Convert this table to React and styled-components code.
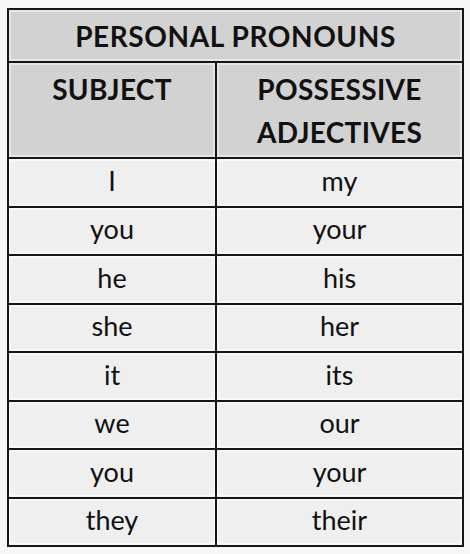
import React from "react";
import styled, { createGlobalStyle } from "styled-components";

const Global = createGlobalStyle`
  html, body { margin: 0; padding: 0; background: #f7f7f7; }
  body { font-family: "Lato", "Open Sans", "Liberation Sans", sans-serif; }
`;

const Page = styled.div`
  padding: 8px 0 0 7px;
`;

const Table = styled.table`
  border-collapse: collapse;
  width: 455px;
  table-layout: fixed;
  color: #111;
  border: 2px solid #161616;
`;

const HeadCell = styled.th`
  border: 2px solid #161616;
  background: #d2d2d2;
  box-shadow: inset 0 0 0 2px #e6e6e6;
  font-weight: 700;
  font-size: 28px;
  letter-spacing: ${(p) => p.$ls || 0.3}px;
  text-align: center;
  padding: 0;
  height: ${(p) => p.$h}px;
  vertical-align: ${(p) => p.$valign || "middle"};
  line-height: ${(p) => p.$lh || 30}px;
  padding-top: ${(p) => p.$pt || 0}px;
  box-sizing: border-box;
`;

const Cell = styled.td`
  border: 2px solid #161616;
  background: #efefef;
  box-shadow: inset 0 0 0 2px #f7f7f7;
  font-size: 27px;
  text-align: center;
  padding: 0 0 3px 0;
  height: 48.5px;
  box-sizing: border-box;
  line-height: 30px;
`;

const rows = [
  ["I", "my"],
  ["you", "your"],
  ["he", "his"],
  ["she", "her"],
  ["it", "its"],
  ["we", "our"],
  ["you", "your"],
  ["they", "their"],
];

export default function App() {
  return (
    <>
      <Global />
      <Page>
        <Table>
          <colgroup>
            <col style={{ width: 208 }} />
            <col style={{ width: 247 }} />
          </colgroup>
          <thead>
            <tr>
              <HeadCell colSpan={2} $h={53} $ls={0.6}>PERSONAL PRONOUNS</HeadCell>
            </tr>
            <tr>
              <HeadCell $h={96} $valign="top" $lh={43} $pt={5}>SUBJECT</HeadCell>
              <HeadCell $h={96} $valign="top" $lh={43} $pt={5}>
                POSSESSIVE
                <br />
                ADJECTIVES
              </HeadCell>
            </tr>
          </thead>
          <tbody>
            {rows.map(([a, b], i) => (
              <tr key={i}>
                <Cell>{a}</Cell>
                <Cell>{b}</Cell>
              </tr>
            ))}
          </tbody>
        </Table>
      </Page>
    </>
  );
}
